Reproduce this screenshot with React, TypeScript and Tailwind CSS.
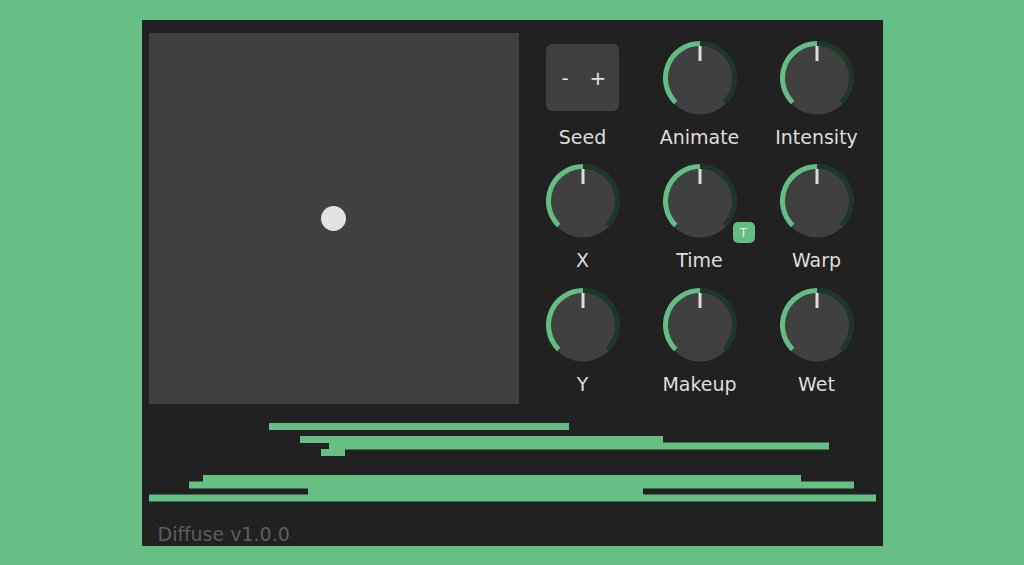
import React from 'react';

const font = { fontFamily: '"DejaVu Sans", Verdana, sans-serif' };

const bars = [
  { x: 127, y: 19, w: 300 },
  { x: 158, y: 32, w: 363 },
  { x: 187, y: 38.5, w: 500 },
  { x: 179, y: 45, w: 24 },
  { x: 61, y: 71, w: 598 },
  { x: 47, y: 77.5, w: 665 },
  { x: 166, y: 84, w: 335 },
  { x: 7, y: 90.5, w: 727 },
];

const Knob: React.FC<{ badge?: boolean }> = ({ badge }) => (
  <div className="relative w-[74px] h-[74px]">
    <svg width="74" height="74" viewBox="0 0 74 74">
      <circle cx="37" cy="37" r="36.5" fill="#404040" />
      <path d="M 37 2.5 A 34.5 34.5 0 0 1 61.4 61.4" fill="none" stroke="#1e3827" strokeWidth="5" />
      <path d="M 12.6 61.4 A 34.5 34.5 0 0 1 37 2.5" fill="none" stroke="#64bd84" strokeWidth="5" />
      <line x1="37" y1="5" x2="37" y2="20" stroke="#dcdcdc" strokeWidth="3" />
    </svg>
    {badge && (
      <div className="absolute left-[70px] top-[58px] w-[22px] h-[21px] rounded-[5px] bg-[#66bd84] flex items-center justify-center text-[12px] text-[#e8f5ec]">
        T
      </div>
    )}
  </div>
);

const SeedBox: React.FC = () => (
  <div className="w-[73px] h-[67px] rounded-md bg-[#404040] flex text-[20px] text-[#e2e2e2]">
    <div className="flex-1 flex items-center justify-center pl-[3px] border-r border-[#3c3c3c]">-</div>
    <div className="flex-1 flex items-center justify-center pr-[5px]">+</div>
  </div>
);

const Cell: React.FC<{ label: string; children: React.ReactNode }> = ({ label, children }) => (
  <div className="h-[123px] flex flex-col items-center pt-[8px]">
    <div className="h-[74px] flex items-center justify-center">{children}</div>
    <div className="mt-[11px] leading-[23px] text-[19px] text-[#dedede]">{label}</div>
  </div>
);

export default function App() {
  return (
    <div className="w-[1024px] h-[565px] bg-[#67bf86] flex items-center justify-center" style={font}>
      <div className="w-[741px] h-[526px] bg-[#212121] flex flex-col pt-[13px]">
        <div className="flex pl-[7px]">
          <div className="w-[370px] h-[371px] bg-[#404040] flex items-center justify-center">
            <div className="w-[25px] h-[25px] rounded-full bg-[#e2e2e2]" />
          </div>
          <div className="ml-[5.5px] grid grid-cols-[117px_117px_117px]">
            <Cell label="Seed"><SeedBox /></Cell>
            <Cell label="Animate"><Knob /></Cell>
            <Cell label="Intensity"><Knob /></Cell>
            <Cell label="X"><Knob /></Cell>
            <Cell label="Time"><Knob badge /></Cell>
            <Cell label="Warp"><Knob /></Cell>
            <Cell label="Y"><Knob /></Cell>
            <Cell label="Makeup"><Knob /></Cell>
            <Cell label="Wet"><Knob /></Cell>
          </div>
        </div>
        <svg width="741" height="102" viewBox="0 0 741 102" className="block">
          {bars.map((b, i) => (
            <rect key={i} x={b.x} y={b.y} width={b.w} height="7" fill="#67bf86" />
          ))}
        </svg>
        <div className="pl-[16px] mt-[17px] leading-[23px] text-[19px] text-[#5d5d5d]">Diffuse v1.0.0</div>
      </div>
    </div>
  );
}
